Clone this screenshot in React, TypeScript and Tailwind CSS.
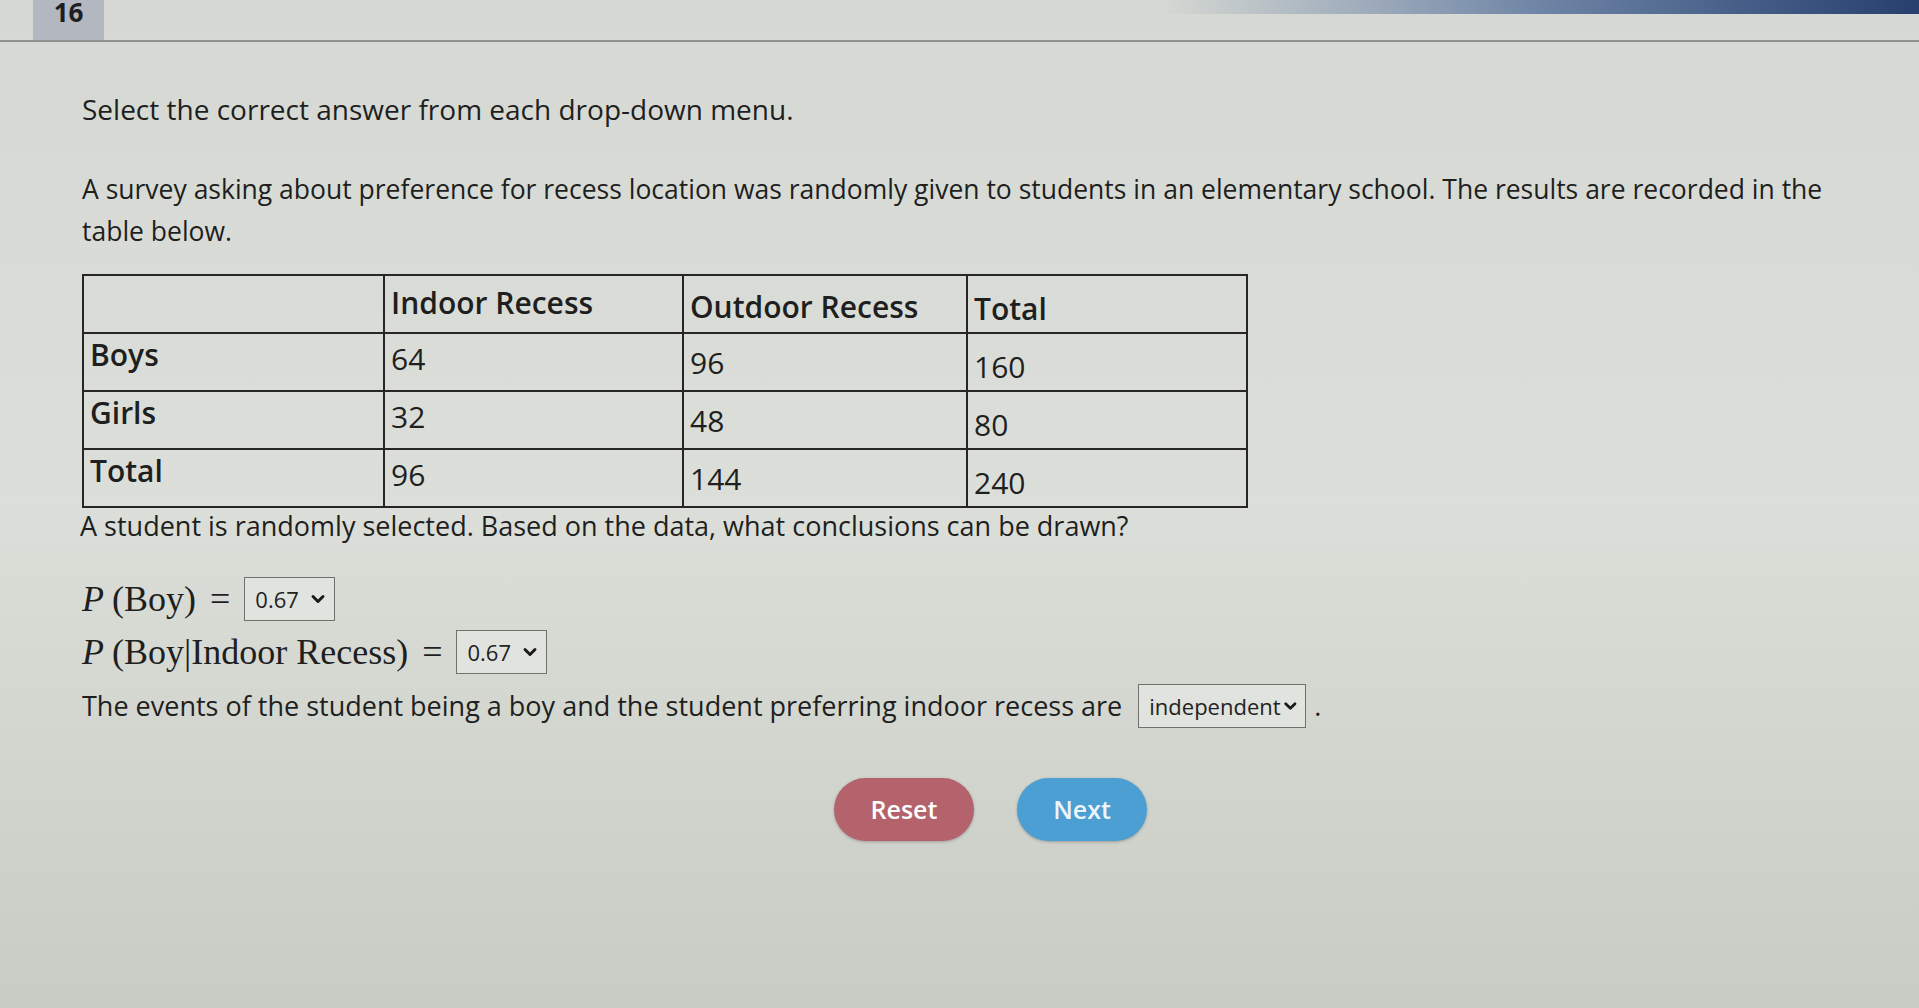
import { ChevronDown } from "lucide-react";

type Row = {
    label: string;
    indoor: string;
    outdoor: string;
    total: string;
};

const rows: Row[] = [
    { label: "Boys", indoor: "64", outdoor: "96", total: "160" },
    { label: "Girls", indoor: "32", outdoor: "48", total: "80" },
    { label: "Total", indoor: "96", outdoor: "144", total: "240" },
];

function Dropdown({ value, width }: { value: string; width: string }) {
    return (
        <span
            className={`inline-flex items-center justify-between ${width} h-[44px] pl-[10px] pr-[6px] border border-[#6f716d] bg-[#e1e3de] text-[22px] text-[#222] font-['Open_Sans',sans-serif] align-middle`}
        >
            <span>{value}</span>
            <ChevronDown size={20} strokeWidth={3.5} className="text-[#1a1a1a]" />
        </span>
    );
}

export default function App() {
    return (
        <main className="min-h-[1008px] w-[1919px] bg-gradient-to-b from-[#d6d9d3] via-[#dcdfd9] to-[#c9ccc4] font-['Open_Sans',sans-serif] text-[#1e1f1e]">
            <header className="flex items-start h-[42px] border-b-2 border-[#8f928c]">
                <div className="ml-[33px] w-[71px] h-[40px] bg-[#b3b7bf] flex justify-center items-start pt-[2px] text-[26px] font-bold leading-[20px] text-[#1d1e22]">
                    16
                </div>
                <div className="flex-1" />
                <div className="w-[760px] h-[14px] bg-gradient-to-r from-transparent via-[#6f85a6] to-[#263f6e]" />
            </header>

            <section className="pl-[82px] pr-[60px]">
                <p className="mt-[48px] text-[28px] leading-[38px]">
                    Select the correct answer from each drop-down menu.
                </p>

                <p className="mt-[40px] text-[26.5px] leading-[42px] max-w-[1790px]">
                    A survey asking about preference for recess location was randomly given to students in an elementary school. The results are recorded in the table below.
                </p>

                <table className="mt-[22px] border-collapse text-[30px] leading-[38px]">
                    <thead>
                        <tr className="h-[58px]">
                            <th className="w-[301px] border-2 border-[#262626]" />
                            <th className="w-[299px] border-2 border-[#262626] text-left align-top px-[6px] pt-[8px] font-semibold">
                                Indoor Recess
                            </th>
                            <th className="w-[284px] border-2 border-[#262626] text-left align-top px-[6px] pt-[12px] font-semibold">
                                Outdoor Recess
                            </th>
                            <th className="w-[280px] border-2 border-[#262626] text-left align-top px-[6px] pt-[14px] font-semibold">
                                Total
                            </th>
                        </tr>
                    </thead>
                    <tbody>
                        {rows.map((row) => (
                            <tr key={row.label} className="h-[58px]">
                                <td className="border-2 border-[#262626] align-top px-[6px] pt-[2px] font-semibold">
                                    {row.label}
                                </td>
                                <td className="border-2 border-[#262626] align-top px-[6px] pt-[6px]">
                                    {row.indoor}
                                </td>
                                <td className="border-2 border-[#262626] align-top px-[6px] pt-[10px]">
                                    {row.outdoor}
                                </td>
                                <td className="border-2 border-[#262626] align-top px-[6px] pt-[14px]">
                                    {row.total}
                                </td>
                            </tr>
                        ))}
                    </tbody>
                </table>

                <p className="-ml-[2px] text-[27px] leading-[36px]">
                    A student is randomly selected. Based on the data, what conclusions can be drawn?
                </p>

                <div className="mt-[30px] flex flex-col gap-[3px]">
                    <div className="flex items-center h-[50px] font-['Liberation_Serif',serif] text-[36px]">
                        <span className="italic">P</span>
                        <span className="ml-[8px]">(Boy)</span>
                        <span className="mx-[14px]">=</span>
                        <Dropdown value="0.67" width="w-[91px]" />
                    </div>
                    <div className="flex items-center h-[50px] font-['Liberation_Serif',serif] text-[36px]">
                        <span className="italic">P</span>
                        <span className="ml-[8px]">(Boy|Indoor Recess)</span>
                        <span className="mx-[14px]">=</span>
                        <Dropdown value="0.67" width="w-[91px]" />
                    </div>
                    <div className="flex items-center h-[52px] text-[27px]">
                        <span>The events of the student being a boy and the student preferring indoor recess are</span>
                        <span className="ml-[16px]">
                            <Dropdown value="independent" width="w-[168px]" />
                        </span>
                        <span className="ml-[8px]">.</span>
                    </div>
                </div>

                <div className="mt-[46px] flex gap-[43px] ml-[752px]">
                    <button className="w-[140px] h-[63px] rounded-full bg-[#b4626b] text-white text-[25px] font-semibold shadow-[0_1px_3px_rgba(0,0,0,0.25)]">
                        Reset
                    </button>
                    <button className="w-[130px] h-[63px] rounded-full bg-[#4b9fd2] text-[#eef4f8] text-[25px] font-semibold shadow-[0_1px_3px_rgba(0,0,0,0.25)]">
                        Next
                    </button>
                </div>
            </section>
        </main>
    );
}
